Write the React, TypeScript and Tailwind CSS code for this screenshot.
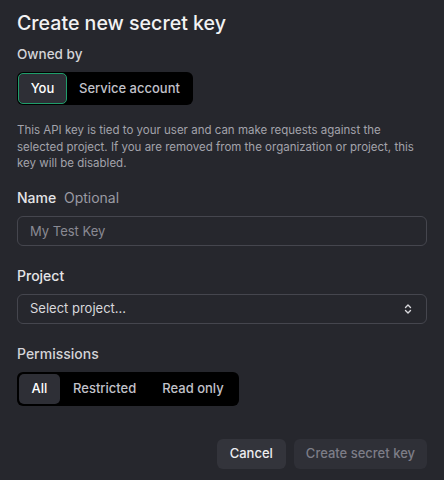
import React, { useState } from 'react'

const font = { fontFamily: 'Inter, "Noto Sans", sans-serif' }

const ChevronUpDown = () => (
  <svg width="12" height="12" viewBox="0 0 12 12" fill="none" stroke="currentColor" strokeWidth="1.4" strokeLinecap="round" strokeLinejoin="round">
    <path d="M3.5 4.5 6 2l2.5 2.5" />
    <path d="M3.5 7.5 6 10l2.5-2.5" />
  </svg>
)

export default function App() {
  const [owner, setOwner] = useState<'you' | 'service'>('you')
  const [perm, setPerm] = useState('All')

  return (
    <div className="w-[444px] h-[480px] bg-[#26272d] text-white px-[17px] pt-[10px] flex flex-col" style={font}>
      <h1 className="text-[19.6px] leading-[26px] font-medium text-[#f2f2f3]">Create new secret key</h1>

      <div className="mt-[9px] text-[13.5px] leading-[18px] font-medium text-[#d4d4d8]">Owned by</div>
      <div className="mt-[9px] flex w-fit bg-black rounded-[6px] p-px">
        <button
          onClick={() => setOwner('you')}
          className={`h-[31px] w-[49px] rounded-[5px] text-[13px] font-medium ${
            owner === 'you' ? 'bg-[#2e2f36] border border-[#1f9d6b] text-white' : 'text-[#c2c2ca]'
          }`}
        >
          You
        </button>
        <button
          onClick={() => setOwner('service')}
          className={`h-[31px] px-[12px] rounded-[5px] text-[13px] font-medium ${
            owner === 'service' ? 'bg-[#2e2f36] border border-[#1f9d6b] text-white' : 'text-[#c2c2ca]'
          }`}
        >
          Service account
        </button>
      </div>

      <p className="mt-[17px] max-w-[398px] text-[11.5px] leading-[16.5px] text-[#a3a3ab]">
        This API key is tied to your user and can make requests against the selected project. If you are removed from the organization or project, this key will be disabled.
      </p>

      <div className="mt-[17px] text-[14px] leading-[18px] font-medium text-[#e4e4e7]">
        Name <span className="ml-[4px] font-normal text-[#9a9aa3]">Optional</span>
      </div>
      <input
        placeholder="My Test Key"
        className="mt-[9px] h-[30px] w-full rounded-[6px] border border-[#45464e] bg-transparent px-[12px] text-[13px] text-white placeholder:text-[#8a8a93] outline-none"
      />

      <div className="mt-[21px] text-[14px] leading-[18px] font-medium text-[#e4e4e7]">Project</div>
      <button className="mt-[9px] h-[30px] w-full rounded-[6px] border border-[#45464e] px-[12px] flex items-center justify-between text-[13px] text-[#d8d8dc]">
        <span>Select project...</span>
        <span className="text-[#d8d8dc]"><ChevronUpDown /></span>
      </button>

      <div className="mt-[21px] text-[14px] leading-[18px] font-medium text-[#d4d4d8]">Permissions</div>
      <div className="mt-[9px] flex w-fit bg-black rounded-[6px] p-[2px]">
        {['All', 'Restricted', 'Read only'].map((p) => (
          <button
            key={p}
            onClick={() => setPerm(p)}
            className={`h-[30px] rounded-[5px] text-[13px] font-medium ${p === 'All' ? 'w-[41px]' : 'px-[13px]'} ${
              perm === p ? 'bg-[#2e2f36] text-white' : 'text-[#c2c2ca]'
            }`}
          >
            {p}
          </button>
        ))}
      </div>

      <div className="mt-[33px] flex justify-end gap-[8px]">
        <button className="h-[30px] px-[13px] rounded-[6px] bg-[#33343b] text-[13px] font-medium text-[#ededf0]">Cancel</button>
        <button className="h-[30px] px-[12px] rounded-[6px] bg-[#2f3037] text-[13px] font-medium text-[#7d7d87]">Create secret key</button>
      </div>
    </div>
  )
}
